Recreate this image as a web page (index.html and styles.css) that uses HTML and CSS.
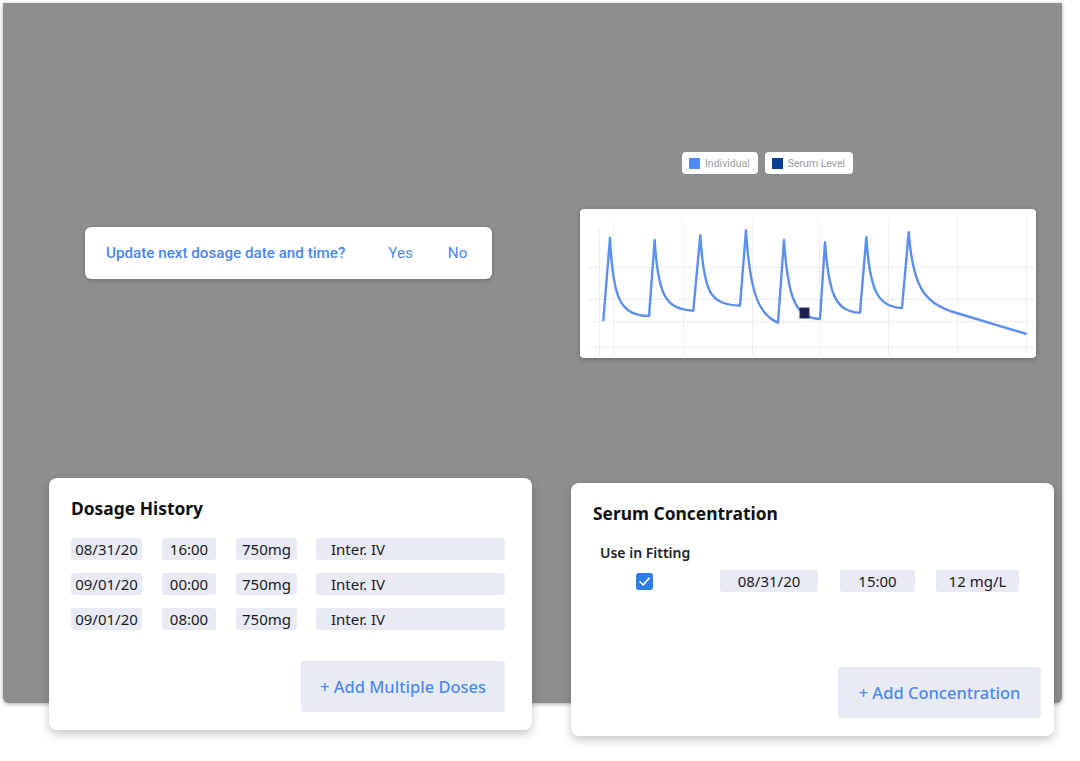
FILE: index.html
```html
<!DOCTYPE html>
<html lang="en">
<head>
    <meta charset="UTF-8">
    <meta name="viewport" content="width=device-width, initial-scale=1.0">
    <title>Dosing</title>

    <link rel="stylesheet" href="styles.css">
</head>
<body>
    <div class="scene">
        <div class="panel">
            <div class="top-row">
                <div class="prompt">
                    <span class="prompt-text">Update next dosage date and time?</span>
                    <span class="prompt-btn yes">Yes</span>
                    <span class="prompt-btn">No</span>
                </div>

                <div class="chart-col">
                    <div class="legend">
                        <div class="legend-chip"><span class="swatch ind"></span>Individual</div>
                        <div class="legend-chip"><span class="swatch serum"></span>Serum Level</div>
                    </div>
                    <div class="chart-card">
                        <svg width="456" height="149" viewBox="0 0 456 149">
                            <!-- grid -->
                            <g stroke="#ededed" stroke-width="1">
                                <line x1="19.5" y1="20" x2="19.5" y2="147" />
                                <line x1="34" y1="9" x2="34" y2="146" />
                                <line x1="103.5" y1="9" x2="103.5" y2="146" />
                                <line x1="172.5" y1="9" x2="172.5" y2="146" />
                                <line x1="239.5" y1="9" x2="239.5" y2="146" />
                                <line x1="308.5" y1="9" x2="308.5" y2="146" />
                                <line x1="377.5" y1="9" x2="377.5" y2="146" />
                                <line x1="446.5" y1="9" x2="446.5" y2="146" />
                                <line x1="9" y1="58.5" x2="454" y2="58.5" />
                                <line x1="9" y1="90.5" x2="454" y2="90.5" />
                                <line x1="13" y1="112.5" x2="454" y2="112.5" />
                                <line x1="11" y1="138.5" x2="454" y2="138.5" />
                            </g>
                            <!-- individual curve -->
                            <path fill="none" stroke="#5b8ff0" stroke-width="2.4" stroke-linejoin="round"
                                d="M23.3 112 L30 28.7 C33 91 40 106 69 107 L74.7 31 C78 88 86 100 113.3 101.7 L120.3 26.3 C124 85 130 95 160 96.7 L166 21.3 C170 88 180 106 198 113.7 L204 31 C208 92 216 108 240 110 L245 33.3 C249 88 256 102 280 103.7 L286.3 28.3 C290 84 298 97 322 99 L328.7 23.3 C333 80 345 92 370 102 L446.7 125" />
                            <!-- serum level -->
                            <rect x="220" y="99" width="9" height="10" fill="#1b1c4f" stroke="#2d2f66" stroke-width="1" />
                        </svg>
                    </div>
                </div>
            </div>
        </div>

        <div class="cards">
            <div class="card dosage">
                <h2 class="card-title">Dosage History</h2>
                <div class="dose-list">
                    <div class="dose-row">
                        <span class="chip c-date">08/31/20</span>
                        <span class="chip c-time">16:00</span>
                        <span class="chip c-amt">750mg</span>
                        <span class="chip c-route">Inter. IV</span>
                    </div>
                    <div class="dose-row">
                        <span class="chip c-date">09/01/20</span>
                        <span class="chip c-time">00:00</span>
                        <span class="chip c-amt">750mg</span>
                        <span class="chip c-route">Inter. IV</span>
                    </div>
                    <div class="dose-row">
                        <span class="chip c-date">09/01/20</span>
                        <span class="chip c-time">08:00</span>
                        <span class="chip c-amt">750mg</span>
                        <span class="chip c-route">Inter. IV</span>
                    </div>
                </div>
                <div class="card-foot">
                    <div class="add-btn">+ Add Multiple Doses</div>
                </div>
            </div>

            <div class="card serum">
                <h2 class="card-title">Serum Concentration</h2>
                <div class="fit-label">Use in Fitting</div>
                <div class="serum-row">
                    <span class="check">
                        <svg width="17" height="17" viewBox="0 0 17 17">
                            <path d="M4 8.8 L7.2 12 L13.2 5.2" fill="none" stroke="#fff" stroke-width="1.6" stroke-linecap="round" stroke-linejoin="round" />
                        </svg>
                    </span>
                    <span class="chip s-date">08/31/20</span>
                    <span class="chip s-time">15:00</span>
                    <span class="chip s-val">12 mg/L</span>
                </div>
                <div class="card-foot">
                    <div class="add-btn wide">+ Add Concentration</div>
                </div>
            </div>
        </div>
    </div>
</body>
</html>
```

FILE: styles.css
```css
* {
    margin: 0;
    padding: 0;
    box-sizing: border-box;
}

body {
    background-color: #fff;
    font-family: "Noto Sans", "Open Sans", sans-serif;
    color: #1b1b1f;
}

.scene {
    padding: 3px 18px 0 3px;
    width: 1080px;
    height: 761px;
    overflow: hidden;
}

.panel {
    height: 700px;
    background-color: #8e8e8e;
    border-radius: 1px 1px 6px 6px;
    box-shadow: 0 1px 4px rgba(0, 0, 0, 0.35);
}

.top-row {
    display: flex;
    align-items: flex-start;
    padding-top: 149px;
}

/* popup */
.prompt {
    display: flex;
    align-items: center;
    width: 407px;
    height: 52px;
    margin: 75px 0 0 82px;
    padding-left: 21px;
    background-color: #fff;
    border-radius: 6px;
    box-shadow: 0 1px 4px rgba(0, 0, 0, 0.25);
    font-family: Roboto, "Liberation Sans", sans-serif;
    font-size: 15.2px;
    color: #4a86f0;
}

.prompt-text {
    font-weight: 500;
}

.prompt-btn.yes {
    margin-left: 43px;
}

.prompt-btn {
    margin-left: 35px;
}

/* chart */
.chart-col {
    margin-left: 88px;
}

.legend {
    display: flex;
    gap: 7px;
    margin-left: 102px;
}

.legend-chip {
    display: flex;
    align-items: center;
    height: 22px;
    padding: 0 8px 0 7px;
    background-color: #fff;
    border-radius: 4px;
    font-family: Roboto, "Liberation Sans", sans-serif;
    font-size: 10.5px;
    color: #9c9ca6;
}

.swatch {
    width: 11px;
    height: 11px;
    margin-right: 5px;
}

.swatch.ind {
    background-color: #4d8cf6;
}

.swatch.serum {
    background-color: #0b3f93;
}

.chart-card {
    width: 456px;
    height: 149px;
    margin-top: 35px;
    background-color: #fff;
    border-radius: 4px;
    box-shadow: 0 1px 5px rgba(0, 0, 0, 0.3);
}

.chart-card svg {
    display: block;
}

/* bottom cards */
.cards {
    position: relative;
    display: flex;
    align-items: flex-start;
    gap: 39px;
    margin-top: -225px;
    padding-left: 46px;
}

.card {
    display: flex;
    flex-direction: column;
    width: 483px;
    background-color: #fff;
    border-radius: 8px;
    box-shadow: 0 4px 10px rgba(0, 0, 0, 0.22);
}

.card.dosage {
    height: 252px;
    padding: 19px 27px 18px 22px;
}

.card.serum {
    height: 253px;
    margin-top: 5px;
    padding: 19px 13px 18px 22px;
}

.card-title {
    font-size: 17.4px;
    font-weight: 700;
    line-height: 22px;
    color: #111;
}

.dose-list {
    display: flex;
    flex-direction: column;
    gap: 13px;
    margin-top: 19px;
}

.dose-row {
    display: flex;
}

.chip {
    display: flex;
    align-items: center;
    justify-content: center;
    height: 22px;
    background-color: #e8ebf3;
    border-radius: 3px;
    font-size: 15px;
    color: #1b1b1f;
}

.c-date { width: 71px; }
.c-time { width: 54px; margin-left: 20px; }
.c-amt { width: 61px; margin-left: 20px; }
.c-route {
    width: 189px;
    margin-left: 19px;
    justify-content: flex-start;
    padding-left: 15px;
}

.card-foot {
    display: flex;
    justify-content: flex-end;
    margin-top: auto;
}

.add-btn {
    display: flex;
    align-items: center;
    justify-content: center;
    width: 204px;
    height: 51px;
    background-color: #e8ebf3;
    border-radius: 3px;
    font-size: 16.5px;
    font-weight: 500;
    color: #4d8af2;
}

.add-btn.wide {
    width: 203px;
}

.fit-label {
    margin: 19px 0 0 7px;
    font-size: 14px;
    font-weight: 600;
    color: #222;
}

.serum-row {
    display: flex;
    align-items: center;
    margin-top: 8px;
}

.check {
    display: flex;
    width: 17px;
    height: 17px;
    margin-left: 43px;
    background-color: #2b7de9;
    border-radius: 3px;
}

.s-date { width: 98px; margin-left: 67px; }
.s-time { width: 75px; margin-left: 22px; }
.s-val { width: 83px; margin-left: 21px; }
```
